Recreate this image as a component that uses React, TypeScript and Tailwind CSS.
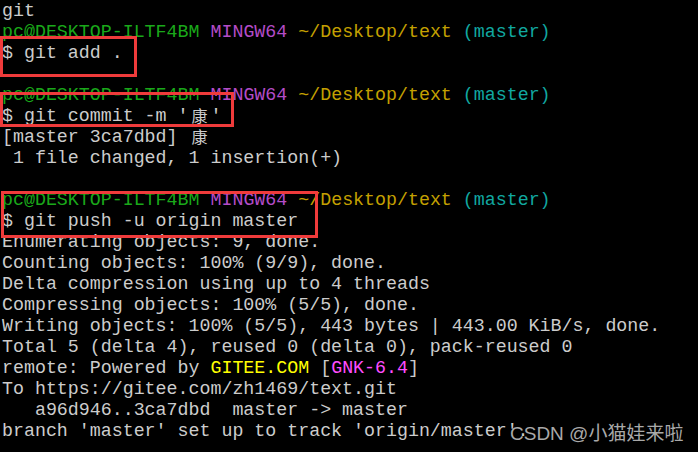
const green = 'text-[#1aa81a]';
const purple = 'text-[#b44cc8]';
const yellow = 'text-[#c4a000]';
const cyan = 'text-[#11a8a0]';

const Prompt = () => (
    <div className="h-[21px]">
        <span className={green}>pc@DESKTOP-ILTF4BM</span>{' '}
        <span className={purple}>MINGW64</span>{' '}
        <span className={yellow}>~/Desktop/text</span>{' '}
        <span className={cyan}>(master)</span>
    </div>
);

// CJK glyph takes two terminal cells
const Kang = () => (
    <span className="inline-block h-[18px] w-[22px] align-top text-center font-['Noto_Sans_CJK_SC',sans-serif] text-[16px] leading-[19px]">康</span>
);

export default function App() {
    return (
        <div className="relative w-[698px] h-[452px] overflow-hidden bg-black">
            <div className="pl-[2px] pt-[1px] font-['Liberation_Mono',monospace] text-[18.3px] leading-[21px] text-[#cccccc] whitespace-pre [&>div]:h-[21px]">
                <div>git</div>
                <Prompt />
                <div>$ git add .</div>
                <div>&nbsp;</div>
                <Prompt />
                <div>
                    $ git commit -m '<Kang />'
                </div>
                <div>
                    [master 3ca7dbd] <Kang />
                </div>
                <div> 1 file changed, 1 insertion(+)</div>
                <div>&nbsp;</div>
                <Prompt />
                <div>$ git push -u origin master</div>
                <div>Enumerating objects: 9, done.</div>
                <div>Counting objects: 100% (9/9), done.</div>
                <div>Delta compression using up to 4 threads</div>
                <div>Compressing objects: 100% (5/5), done.</div>
                <div>Writing objects: 100% (5/5), 443 bytes | 443.00 KiB/s, done.</div>
                <div>Total 5 (delta 4), reused 0 (delta 0), pack-reused 0</div>
                <div>
                    remote: Powered by <span className="text-[#ffff00]">GITEE.COM</span> [
                    <span className="text-[#ff4dff]">GNK-6.4</span>]
                </div>
                <div>To https://gitee.com/zh1469/text.git</div>
                <div>   a96d946..3ca7dbd  master -&gt; master</div>
                <div>branch 'master' set up to track 'origin/master'.</div>
            </div>

            {/* annotation boxes */}
            <div className="absolute left-0 top-[36px] w-[137px] h-[41px] border-[3px] border-[#ef3b3b]" />
            <div className="absolute left-0 top-[92px] w-[234px] h-[35px] border-[3px] border-[#ef3b3b]" />
            <div className="absolute left-[1px] top-[191px] w-[317px] h-[47px] border-[3px] border-[#ef3b3b]" />

            {/* watermark */}
            <div className="absolute left-[510px] top-[422px] font-['Liberation_Sans','Noto_Sans_CJK_SC',sans-serif] text-[19px] leading-[24px] text-[#a9a9a9] whitespace-nowrap">
                CSDN @小猫娃来啦
            </div>
        </div>
    );
}
